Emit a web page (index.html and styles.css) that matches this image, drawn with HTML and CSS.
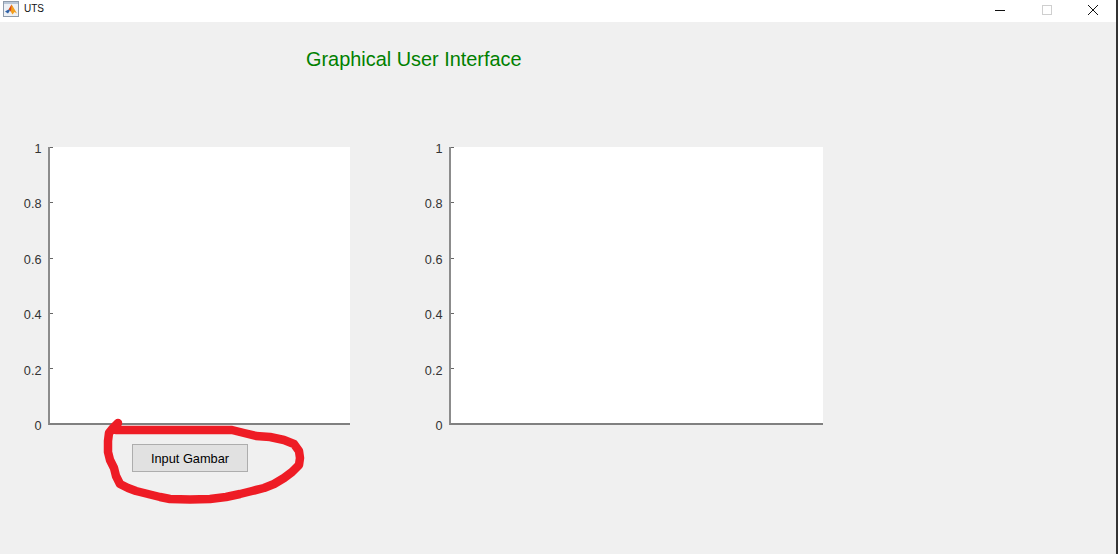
FILE: index.html
```html
<!DOCTYPE html>
<html lang="en">
<head>
<meta charset="utf-8">
<title>UTS</title>
<link rel="stylesheet" href="styles.css">
</head>
<body>
<div class="window">
  <header class="titlebar">
    <div class="app">
      <svg class="app-icon" width="16" height="16" viewBox="0 0 16 16">
        <rect x="0.5" y="0.5" width="15" height="15" fill="#eef1f5" stroke="#8e9bab"/>
        <rect x="1" y="1" width="14" height="2" fill="#b9c7d8"/>
        <path d="M2 10.500 L5.500 8.500 L7 9.500 L5 12.500 Z" fill="#2f62a8"/>
        <path d="M5.500 8.500 L8.500 3.500 L10 6.500 L8 11 L7 9.500 Z" fill="#d9481c"/>
        <path d="M8.500 3.500 L10.500 6.500 L14 12.500 L11.500 11 L9.500 13.500 L8 11 Z" fill="#f2a01f"/>
      </svg>
      <span class="app-name">UTS</span>
    </div>
    <div class="controls">
      <svg class="ctl" width="46" height="16" viewBox="0 0 46 16"><path d="M17 9.5 H27" stroke="#111" stroke-width="1"/></svg>
      <svg class="ctl" width="46" height="16" viewBox="0 0 46 16"><rect x="18.5" y="4.5" width="9" height="9" fill="none" stroke="#cfcfcf"/></svg>
      <svg class="ctl" width="46" height="16" viewBox="0 0 46 16"><path d="M18 4 L28 14 M28 4 L18 14" stroke="#111" stroke-width="1" fill="none"/></svg>
    </div>
  </header>
  <main class="figure">
    <h1 class="heading">Graphical User Interface</h1>
    <div class="plots">
      <section class="plot plot-left">
        <div class="ylabels">
          <span>1</span><span>0.8</span><span>0.6</span><span>0.4</span><span>0.2</span><span>0</span>
        </div>
        <div class="axes axes-left">
          <div class="ticks"><i></i><i></i><i></i><i></i><i></i></div>
        </div>
      </section>
      <section class="plot plot-right">
        <div class="ylabels">
          <span>1</span><span>0.8</span><span>0.6</span><span>0.4</span><span>0.2</span><span>0</span>
        </div>
        <div class="axes axes-right">
          <div class="ticks"><i></i><i></i><i></i><i></i><i></i></div>
        </div>
      </section>
    </div>
    <button class="btn" type="button">Input Gambar</button>
  </main>
  <svg class="scribble" width="1118" height="554" viewBox="0 0 1118 554">
    <path d="M118 423 L113 428 L109 433 L108 441 L108 452 L110 460 L114 468 L116 476 L120 484 L128 488 L136 491 L148 494 L160 497 L170 499 L190 499.500 L210 499 L226 497 L240 494 L252 491 L264 488 L274 484 L284 478 L292 472 L299 465 L300 458 L299 451 L294 444 L284 440 L270 437 L256 436 L244 433 L232 430 L200 430 L160 430 L116 430" fill="none" stroke="#ee1c25" stroke-width="8.500" stroke-linecap="round" stroke-linejoin="round"/>
  </svg>
  <div class="edge"></div>
</div>
</body>
</html>
```
FILE: styles.css
```css
* { box-sizing: border-box; }
html, body { margin: 0; padding: 0; }
body { width: 1118px; height: 554px; overflow: hidden; font-family: "Liberation Sans", Arial, sans-serif; background: #f0f0f0; }
.window { position: relative; width: 1118px; height: 554px; display: flex; flex-direction: column; }
.titlebar { height: 22px; flex: none; background: #fff; display: flex; justify-content: space-between; align-items: center; padding: 0 2px 0 3px; }
.app { display: flex; align-items: center; gap: 5px; margin-top: -5px; }
.app-name { font-size: 10px; color: #111; }
.app-icon { display: block; }
.controls { display: flex; margin-top: -5px; }
.ctl { display: block; }
.figure { flex: 1; display: flex; flex-direction: column; background: #f0f0f0; }
.heading { margin: 25px 0 0 306px; font-size: 19.9px; line-height: 24px; font-weight: 400; color: #008000; }
.plots { display: flex; margin-top: 76px; }
.plot { display: flex; }
.plot-left { width: 401px; }
.ylabels { width: 41.5px; height: 293px; margin-top: -7px; display: flex; flex-direction: column; justify-content: space-between; align-items: flex-end; font-size: 12.7px; line-height: 14px; color: #333; padding-top: 2px; }
.axes { position: relative; height: 278px; margin-left: 6.5px; background: #fff; border-left: 2px solid #8c8c8c; border-bottom: 2px solid #808080; }
.axes-left { width: 302px; }
.axes-right { width: 374px; }
.ticks { height: 222px; width: 4px; display: flex; flex-direction: column; justify-content: space-between; }
.ticks i { display: block; height: 1px; width: 3px; background: #666; }
.btn { margin: 11px 0 0 132px; width: 116px; height: 28px; padding: 0; background: #e1e1e1; border: 1px solid #adadad; border-radius: 0; font-family: "Liberation Sans", Arial, sans-serif; font-size: 12.8px; color: #000; }
.scribble { position: absolute; left: 0; top: 0; pointer-events: none; }
.edge { position: absolute; right: 0; top: 0; width: 2px; height: 554px; background: #333; }
```
